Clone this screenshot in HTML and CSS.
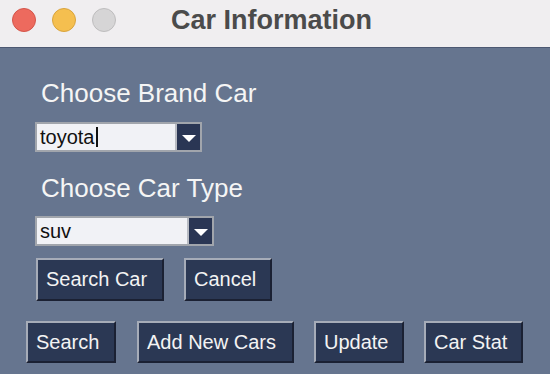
FILE: index.html
```html
<!DOCTYPE html>
<html lang="en">
<head>
    <meta charset="UTF-8">
    <meta name="viewport" content="width=device-width, initial-scale=1.0">
    <title>Car Information</title>
    <link rel="stylesheet" href="styles.css">
</head>
<body>

    <!-- Window Title Bar -->
    <div class="titlebar">
        <div class="lights">
            <span class="light red"></span>
            <span class="light yellow"></span>
            <span class="light grey"></span>
        </div>
        <div class="title">Car Information</div>
    </div>

    <div class="content">
        <!-- Brand -->
        <div class="field-label first">Choose Brand Car</div>
        <div class="combo combo-brand">
            <span class="combo-text">toyota<span class="caret"></span></span>
            <span class="combo-arrow">
                <svg width="14" height="8" viewBox="0 0 14 8"><polygon points="0,0 14,0 7,7" fill="#ffffff"/></svg>
            </span>
        </div>

        <!-- Type -->
        <div class="field-label">Choose Car Type</div>
        <div class="combo combo-type">
            <span class="combo-text">suv</span>
            <span class="combo-arrow">
                <svg width="14" height="8" viewBox="0 0 14 8"><polygon points="0,0 14,0 7,7" fill="#ffffff"/></svg>
            </span>
        </div>

        <div class="actions">
            <button class="btn btn-searchcar">Search Car</button>
            <button class="btn btn-cancel">Cancel</button>
        </div>

        <!-- Bottom Toolbar -->
        <div class="toolbar">
            <button class="btn btn-search">Search</button>
            <button class="btn btn-add">Add New Cars</button>
            <button class="btn btn-update">Update</button>
            <button class="btn btn-stat">Car Stat</button>
        </div>
    </div>

</body>
</html>
```

FILE: styles.css
```css
* { margin: 0; padding: 0; box-sizing: border-box; font-family: 'Liberation Sans', Arial, sans-serif; }
body { background: #66758f; width: 550px; height: 374px; overflow: hidden; }

/* Title Bar */
.titlebar { height: 48px; background: #f0eef0; border-bottom: 1px solid #4c5872; display: flex; align-items: flex-start; }
.lights { display: flex; gap: 16px; margin: 8px 0 0 12px; }
.light { width: 24px; height: 24px; border-radius: 50%; border: 1px solid; }
.light.red { background: #ed6a5e; border-color: #d4554a; }
.light.yellow { background: #f5bf4f; border-color: #d9a43d; }
.light.grey { background: #d6d5d6; border-color: #bebdbe; }
.title { margin: 5px 0 0 55px; font-size: 27px; line-height: 30px; font-weight: bold; color: #4b4b4b; }

/* Main Content */
.content { display: flex; flex-direction: column; align-items: flex-start; }
.field-label { font-size: 26px; line-height: 30px; color: #f5f5f5; margin: 21px 0 0 41px; }
.field-label.first { margin-top: 30px; }

/* Combobox */
.combo {
    display: flex; height: 30px; margin: 14px 0 0 35px; border: 2px solid #a1a5ac;
    background: #f1f2f6;
}
.combo-type { margin-top: 13px; width: 179px; }
.combo-brand { width: 167px; }
.combo-text { flex: 1; padding-left: 3px; font-size: 20px; line-height: 26px; color: #111; display: flex; align-items: center; }
.caret { display: inline-block; width: 2px; height: 20px; background: #111; margin-left: 2px; }
.combo-arrow {
    width: 25px; background: #2a3654; border-left: 2px solid #b9bcc3;
    display: flex; align-items: center; justify-content: center; padding-top: 3px;
}

/* Buttons */
.btn {
    font-size: 20px; color: #f3f3f3; background: #2b3854; cursor: pointer;
    text-align: left; padding-left: 8px;
    border: 2px solid; border-color: #a6acb8 #1b2133 #1b2133 #a6acb8;
}
.actions { display: flex; gap: 20px; margin: 12px 0 0 36px; }
.actions .btn { height: 43px; line-height: 39px; }
.btn-searchcar { width: 128px; }
.btn-cancel { width: 88px; }

.toolbar { display: flex; gap: 20px; margin: 20px 0 0 26px; }
.toolbar .btn { height: 42px; line-height: 38px; }
.btn-search { width: 90px; margin-right: 1px; }
.btn-add { width: 157px; }
.btn-update { width: 90px; }
.btn-stat { width: 99px; }
.btn:hover { background: #34425f; }
```
